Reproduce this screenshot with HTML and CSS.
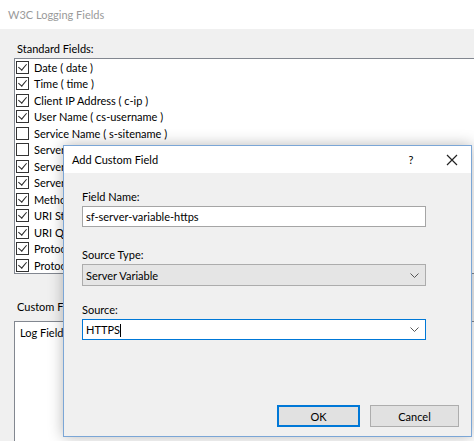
FILE: index.html
```html
<!DOCTYPE html>
<html lang="en">
  <head>
    <meta charset="UTF-8" />
    <title>W3C Logging Fields</title>
    <link rel="stylesheet" href="styles.css">
  </head>
  <body>
    <div class="window">
      <div class="titlebar">W3C Logging Fields</div>
      <div class="window-body">
        <div class="group-label">Standard Fields:</div>
        <ul class="field-list">
          <li><span class="check on"></span>Date ( date )</li>
          <li><span class="check on"></span>Time ( time )</li>
          <li><span class="check on"></span>Client IP Address ( c-ip )</li>
          <li><span class="check on"></span>User Name ( cs-username )</li>
          <li><span class="check"></span>Service Name ( s-sitename )</li>
          <li><span class="check"></span>Server Name ( s-computername )</li>
          <li><span class="check on"></span>Server IP Address ( s-ip )</li>
          <li><span class="check on"></span>Server Port ( s-port )</li>
          <li><span class="check on"></span>Method ( cs-method )</li>
          <li><span class="check on"></span>URI Stem ( cs-uri-stem )</li>
          <li><span class="check on"></span>URI Query ( cs-uri-query )</li>
          <li><span class="check on"></span>Protocol Status ( sc-status )</li>
          <li><span class="check on"></span>Protocol Substatus ( sc-substatus )</li>
        </ul>
        <div class="group-label custom-label">Custom Fields:</div>
        <div class="custom-list">
          <div class="column-header">Log Field</div>
        </div>
      </div>
    </div>

    <!-- Add Custom Field dialog -->
    <div class="dialog">
      <div class="dialog-title">
        <span class="dialog-caption">Add Custom Field</span>
        <span class="title-btn help">?</span>
        <span class="title-btn close">
          <svg width="12" height="12" viewBox="0 0 12 12">
            <path d="M1 1 L11 11 M11 1 L1 11" stroke="#222" stroke-width="1.2" fill="none" />
          </svg>
        </span>
      </div>
      <div class="dialog-body">
        <div class="form-group first">
          <label>Field Name:</label>
          <div class="textbox">sf-server-variable-https</div>
        </div>
        <div class="form-group second">
          <label>Source Type:</label>
          <div class="dropdown">
            <span>Server Variable</span>
            <svg class="chevron" width="9" height="5" viewBox="0 0 9 5">
              <path d="M0.5 0.5 L4.5 4.5 L8.5 0.5" stroke="#555" stroke-width="1" fill="none" />
            </svg>
          </div>
        </div>
        <div class="form-group">
          <label>Source:</label>
          <div class="combobox">
            <span>HTTPS<span class="caret"></span></span>
            <svg class="chevron" width="9" height="5" viewBox="0 0 9 5">
              <path d="M0.5 0.5 L4.5 4.5 L8.5 0.5" stroke="#555" stroke-width="1" fill="none" />
            </svg>
          </div>
        </div>
        <div class="dialog-footer">
          <button class="btn ok">OK</button>
          <button class="btn cancel">Cancel</button>
        </div>
      </div>
    </div>
  </body>
</html>
```

FILE: styles.css
```css
/* General styling */
body {
  margin: 0;
  width: 474px;
  height: 441px;
  overflow: hidden;
  font-family: Lato, "Noto Sans", sans-serif;
  font-size: 11px;
  color: #000;
  background-color: #f0f0f0;
  position: relative;
}

.window {
  height: 100%;
}

.titlebar {
  height: 29px;
  line-height: 29px;
  padding-left: 8px;
  background-color: #fff;
  color: #9a9a9a;
}

.window-body {
  padding: 12px 0 0 14px;
}

.group-label {
  line-height: 16px;
  padding-left: 3px;
  margin-bottom: 1px;
}

.field-list {
  list-style: none;
  margin: 0;
  padding: 0;
  height: 214px;
  background-color: #fff;
  border: 1px solid #828790;
  border-right: none;
}

.field-list li {
  height: 16.5px;
  display: flex;
  align-items: center;
  padding-left: 1px;
  white-space: nowrap;
}

.check {
  width: 11px;
  height: 11px;
  border: 1px solid #333;
  margin-right: 5px;
  position: relative;
  flex-shrink: 0;
}

.check.on::after {
  content: "";
  position: absolute;
  left: 3px;
  top: 0px;
  width: 4px;
  height: 7px;
  border-right: 1.3px solid #222;
  border-bottom: 1.3px solid #222;
  transform: rotate(40deg);
}

.custom-label {
  margin-top: 25px;
  margin-bottom: 6px;
}

.custom-list {
  height: 140px;
  background-color: #fff;
  border: 1px solid #828790;
  border-right: none;
}

.column-header {
  line-height: 22px;
  padding-left: 5px;
}

/* Dialog */
.dialog {
  position: absolute;
  left: 63px;
  top: 145px;
  width: 407px;
  height: 290px;
  border: 1px solid #7ba6d6;
  background-color: #f0f0f0;
  box-shadow: 0 0 14px rgba(0, 0, 0, 0.28);
  display: flex;
  flex-direction: column;
}

.dialog-title {
  height: 27px;
  background-color: #fff;
  display: flex;
  align-items: center;
  padding-left: 8px;
}

.dialog-caption {
  flex: 1;
}

.title-btn {
  display: flex;
  justify-content: center;
  align-items: center;
}

.help {
  width: 20px;
  margin-right: 25px;
}

.close {
  width: 12px;
  margin-right: 13px;
}

.dialog-body {
  flex: 1;
  display: flex;
  flex-direction: column;
  padding: 16px 12px 9px 18px;
}

.form-group label {
  display: block;
  line-height: 16px;
  margin-bottom: 1px;
}

.form-group.first {
  margin-bottom: 20px;
}

.form-group.second {
  margin-bottom: 16px;
}

.textbox,
.dropdown,
.combobox {
  height: 19px;
  border: 1px solid #a5a5a5;
  background-color: #fff;
  display: flex;
  align-items: center;
  justify-content: space-between;
}

.textbox {
  width: 339px;
  padding-left: 3px;
}

.dropdown {
  height: 20px;
  width: 333px;
  background-color: #e5e5e5;
  border-color: #acacac;
  padding: 0 6px 0 3px;
}

.combobox {
  width: 333px;
  border-color: #0078d7;
  padding: 0 6px 0 3px;
}

.caret {
  display: inline-block;
  width: 1px;
  height: 13px;
  background-color: #000;
  vertical-align: -3px;
}

.chevron {
  flex-shrink: 0;
}

.dialog-footer {
  margin-top: auto;
  display: flex;
  justify-content: flex-end;
  gap: 10px;
}

.btn {
  font-family: inherit;
  font-size: 11px;
  height: 22px;
  padding: 0;
  background-color: #e1e1e1;
  border: 1px solid #adadad;
  color: #000;
}

.btn.ok {
  width: 83px;
  border: 2px solid #0078d7;
}

.btn.cancel {
  width: 89px;
}
```
